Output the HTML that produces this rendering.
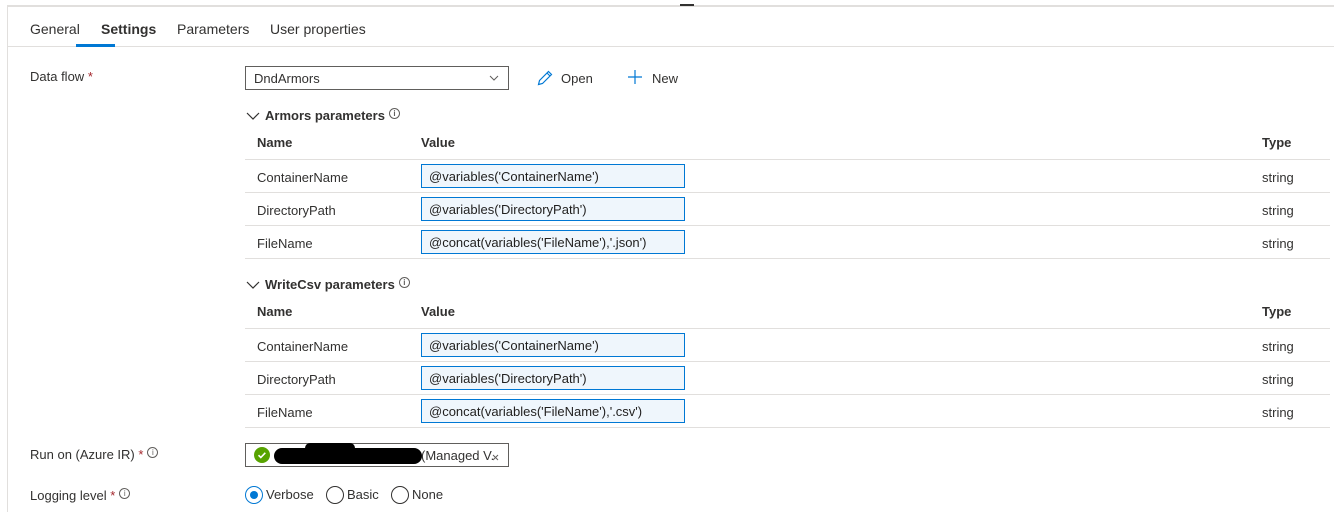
<!DOCTYPE html>
<html><head><style>
*{margin:0;padding:0;box-sizing:border-box}
body{width:1334px;height:512px;background:#fff;font-family:"Segoe UI","Liberation Sans",sans-serif;font-size:13px;color:#323130;position:relative;overflow:hidden}
.a{position:absolute;white-space:nowrap}
.hl{position:absolute;height:1px;background:#e1dfdd}
.inp{position:absolute;left:421px;width:264px;height:24px;border:1px solid #0078d4;background:#eff6fc;padding:4px 7px;font-size:13px;color:#201f1e}
.req{color:#a4262c}
.info{display:inline-block;width:11px;height:11px;border:1px solid #605e5c;border-radius:50%;font-size:8px;line-height:9px;text-align:center;vertical-align:top;color:#605e5c;margin-left:4px}
.radio{position:absolute;width:18px;height:18px;border:1px solid #323130;border-radius:50%}
</style></head><body>
<div class="a" style="left:7px;top:5px;width:1327px;height:2px;background:#e1dfdd"></div>
<div class="a" style="left:7px;top:5px;width:1px;height:507px;background:#e1dfdd"></div>
<div class="a" style="left:680px;top:4px;width:14px;height:2px;background:#323130"></div>
<div class="a" style="left:30px;top:21px;font-size:14px">General</div>
<div class="a" style="left:101px;top:21px;font-size:14px;font-weight:600">Settings</div>
<div class="a" style="left:177px;top:21px;font-size:14px">Parameters</div>
<div class="a" style="left:270px;top:21px;font-size:14px">User properties</div>
<div class="a" style="left:8px;top:46px;width:1326px;height:1px;background:#e1dfdd"></div>
<div class="a" style="left:76px;top:44px;width:39px;height:3px;background:#0078d4"></div>

<div class="a" style="left:30px;top:69px">Data flow <span class="req">*</span></div>
<div class="a" style="left:245px;top:66px;width:264px;height:24px;border:1px solid #605e5c;padding:4px 8px">DndArmors</div>
<svg class="a" style="left:489px;top:75px" width="10" height="6"><path d="M1 1l4 4 4-4" fill="none" stroke="#605e5c" stroke-width="1"/></svg>
<svg class="a" style="left:536px;top:69px" width="18" height="18" viewBox="0 0 18 18"><path d="M12.5 2.5l3 3-9 9-4 1 1-4z M11 4l3 3" fill="none" stroke="#0078d4" stroke-width="1.2"/></svg>
<div class="a" style="left:561px;top:71px">Open</div>
<svg class="a" style="left:627px;top:69px" width="16" height="16"><path d="M8 1v14M1 8h14" stroke="#0078d4" stroke-width="1.2"/></svg>
<div class="a" style="left:652px;top:71px">New</div>

<svg class="a" style="left:246px;top:111px" width="14" height="10"><path d="M1 2l6 6 6-6" fill="none" stroke="#323130" stroke-width="1.2"/></svg>
<div class="a" style="left:265px;top:108px;font-weight:600">Armors parameters<span class="info">i</span></div>
<div class="a" style="left:257px;top:135px;font-weight:600">Name</div>
<div class="a" style="left:421px;top:135px;font-weight:600">Value</div>
<div class="a" style="left:1262px;top:135px;font-weight:600">Type</div>
<div class="hl" style="left:245px;top:159px;width:1085px"></div>
<div class="hl" style="left:245px;top:192px;width:1085px"></div>
<div class="hl" style="left:245px;top:225px;width:1085px"></div>
<div class="hl" style="left:245px;top:258px;width:1085px"></div>
<div class="a" style="left:257px;top:170px">ContainerName</div>
<div class="a" style="left:257px;top:203px">DirectoryPath</div>
<div class="a" style="left:257px;top:236px">FileName</div>
<div class="inp" style="top:164px">@variables('ContainerName')</div>
<div class="inp" style="top:197px">@variables('DirectoryPath')</div>
<div class="inp" style="top:230px">@concat(variables('FileName'),'.json')</div>
<div class="a" style="left:1262px;top:170px">string</div>
<div class="a" style="left:1262px;top:203px">string</div>
<div class="a" style="left:1262px;top:236px">string</div>

<svg class="a" style="left:246px;top:280px" width="14" height="10"><path d="M1 2l6 6 6-6" fill="none" stroke="#323130" stroke-width="1.2"/></svg>
<div class="a" style="left:265px;top:277px;font-weight:600">WriteCsv parameters<span class="info">i</span></div>
<div class="a" style="left:257px;top:304px;font-weight:600">Name</div>
<div class="a" style="left:421px;top:304px;font-weight:600">Value</div>
<div class="a" style="left:1262px;top:304px;font-weight:600">Type</div>
<div class="hl" style="left:245px;top:328px;width:1085px"></div>
<div class="hl" style="left:245px;top:361px;width:1085px"></div>
<div class="hl" style="left:245px;top:394px;width:1085px"></div>
<div class="hl" style="left:245px;top:427px;width:1085px"></div>
<div class="a" style="left:257px;top:339px">ContainerName</div>
<div class="a" style="left:257px;top:372px">DirectoryPath</div>
<div class="a" style="left:257px;top:405px">FileName</div>
<div class="inp" style="top:333px">@variables('ContainerName')</div>
<div class="inp" style="top:366px">@variables('DirectoryPath')</div>
<div class="inp" style="top:399px">@concat(variables('FileName'),'.csv')</div>
<div class="a" style="left:1262px;top:339px">string</div>
<div class="a" style="left:1262px;top:372px">string</div>
<div class="a" style="left:1262px;top:405px">string</div>

<div class="a" style="left:30px;top:447px">Run on (Azure IR) <span class="req">*</span><span class="info">i</span></div>
<div class="a" style="left:245px;top:443px;width:264px;height:24px;border:1px solid #605e5c"></div>
<div class="a" style="left:254px;top:447px;width:16px;height:16px;border-radius:50%;background:#57a300"></div>
<svg class="a" style="left:254px;top:447px" width="16" height="16"><path d="M4.5 8.2l2.3 2.3 4.5-4.7" fill="none" stroke="#fff" stroke-width="1.6"/></svg>
<div class="a" style="left:274px;top:448px;width:148px;height:16px;border-radius:8px;background:#000"></div>
<div class="a" style="left:305px;top:443px;width:50px;height:10px;border-radius:5px;background:#000"></div>
<div class="a" style="left:421px;top:448px">(Managed V.</div>
<svg class="a" style="left:492px;top:454px" width="7" height="7"><path d="M1 1l5 5M6 1l-5 5" stroke="#605e5c" stroke-width="1"/></svg>

<div class="a" style="left:30px;top:488px">Logging level <span class="req">*</span><span class="info">i</span></div>
<div class="radio" style="left:245px;top:486px;border-color:#0078d4"></div>
<div class="a" style="left:250px;top:491px;width:8px;height:8px;border-radius:50%;background:#0078d4"></div>
<div class="a" style="left:266px;top:487px">Verbose</div>
<div class="radio" style="left:326px;top:486px"></div>
<div class="a" style="left:347px;top:487px">Basic</div>
<div class="radio" style="left:391px;top:486px"></div>
<div class="a" style="left:412px;top:487px">None</div>
</body></html>
